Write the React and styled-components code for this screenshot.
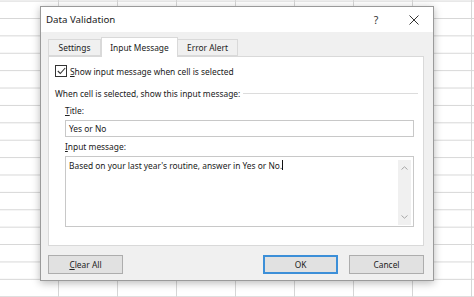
import React from 'react';
import styled, { createGlobalStyle } from 'styled-components';

const GlobalStyle = createGlobalStyle`
  body {
    margin: 0;
    font-family: "Noto Sans", "Open Sans", sans-serif;
    color: #1a1a1a;
  }
`;

const Sheet = styled.div`
  width: 474px;
  height: 297px;
  box-sizing: border-box;
  padding: 6px 0 0 40px;
  overflow: hidden;
  background-color: #fff;
  background-image:
    linear-gradient(to bottom, #d6d6d6 1px, transparent 1px),
    linear-gradient(to right, #d6d6d6 1px, transparent 1px);
  background-size: 100% 17.4px, 59px 100%;
  background-position: 0 0.6px, -1px 0;
`;

const Dialog = styled.div`
  width: 394px;
  height: 275px;
  box-sizing: border-box;
  border: 1px solid #9a9a9a;
  box-shadow: 0 2px 8px rgba(0, 0, 0, 0.28);
  background: #f0f0f0;
  display: flex;
  flex-direction: column;
`;

const TitleBar = styled.div`
  height: 25px;
  background: #fff;
  display: flex;
  align-items: center;
  padding: 0 0 0 5px;
`;

const Title = styled.div`
  flex: 1;
  font-size: 9.7px;
  color: #222;
`;

const BarButton = styled.div`
  width: ${p => p.w}px;
  height: 25px;
  display: flex;
  align-items: center;
  justify-content: center;
  font-size: 10.5px;
  color: #333;
`;

const Body = styled.div`
  flex: 1;
  display: flex;
  flex-direction: column;
  padding: 5px 9px 0 7px;
`;

const Tabs = styled.div`
  display: flex;
  height: 19px;
  align-items: flex-end;
  position: relative;
  z-index: 1;
`;

const Tab = styled.div`
  box-sizing: border-box;
  width: ${p => p.w}px;
  height: ${p => (p.active ? 20 : 17)}px;
  margin-bottom: ${p => (p.active ? -1 : 0)}px;
  display: flex;
  align-items: center;
  justify-content: center;
  font-size: 8.4px;
  color: #222;
  background: ${p => (p.active ? '#fff' : '#f0f0f0')};
  border: 1px solid #d9d9d9;
  border-bottom: ${p => (p.active ? 'none' : '1px solid #d9d9d9')};
  border-left: ${p => (p.first || p.active ? '1px solid #d9d9d9' : 'none')};
`;

const Panel = styled.div`
  box-sizing: border-box;
  height: 190px;
  background: #fff;
  border: 1px solid #d9d9d9;
  padding: 7px 5px 0 6px;
  font-size: 8.4px;
  color: #222;
`;

const CheckRow = styled.label`
  display: flex;
  align-items: center;
  gap: 3px;
  height: 14px;
`;

const Box = styled.span`
  box-sizing: border-box;
  width: 12px;
  height: 12px;
  border: 1px solid #333;
  background: #fff;
  display: flex;
  align-items: center;
  justify-content: center;
`;

const Group = styled.div`
  display: flex;
  align-items: center;
  gap: 3px;
  margin-top: 8px;
  height: 14px;
  white-space: nowrap;
`;

const GroupLine = styled.div`
  flex: 1;
  height: 1px;
  background: #dcdcdc;
`;

const Field = styled.div`
  padding: 0 4px 0 10px;
  display: flex;
  flex-direction: column;
`;

const FieldLabel = styled.div`
  height: 12px;
  line-height: 12px;
  margin-top: ${p => p.mt}px;
  margin-bottom: 3px;
`;

const Input = styled.div`
  box-sizing: border-box;
  height: ${p => p.h}px;
  border: 1px solid #c8c8c8;
  background: #fff;
  padding: ${p => (p.multi ? '3px 2px 0 3px' : '0 3px')};
  display: flex;
  align-items: ${p => (p.multi ? 'flex-start' : 'center')};
  font-size: 8.4px;
  color: #1a1a1a;
`;

const InputText = styled.div`
  flex: 1;
  white-space: nowrap;
`;

const Caret = styled.span`
  display: inline-block;
  width: 1px;
  height: 10px;
  background: #111;
  vertical-align: -1px;
`;

const Scroll = styled.div`
  width: 13px;
  height: 65px;
  background: #f0f0f0;
  display: flex;
  flex-direction: column;
  justify-content: space-between;
  align-items: center;
  padding: 6px 0;
  box-sizing: border-box;
`;

const Footer = styled.div`
  display: flex;
  align-items: center;
  height: 19px;
  margin-top: 9px;
  gap: 11px;
`;

const Button = styled.div`
  box-sizing: border-box;
  width: 75px;
  height: 19px;
  display: flex;
  align-items: center;
  justify-content: center;
  font-size: 8.4px;
  color: #222;
  background: #e1e1e1;
  border: ${p => (p.primary ? '2px solid #3c8fd8' : '1px solid #adadad')};
  margin-left: ${p => (p.push ? 'auto' : '0')};
`;

const Chevron = ({ up }) => (
  <svg width="7" height="4" viewBox="0 0 7 4">
    <path
      d={up ? 'M0.5 3.5 L3.5 0.8 L6.5 3.5' : 'M0.5 0.5 L3.5 3.2 L6.5 0.5'}
      fill="none"
      stroke="#a6a6a6"
      strokeWidth="1"
    />
  </svg>
);

export default function App() {
  return (
    <>
      <GlobalStyle />
      <Sheet>
        <Dialog>
          <TitleBar>
            <Title>Data Validation</Title>
            <BarButton w={38}>?</BarButton>
            <BarButton w={38}>
              <svg width="10" height="10" viewBox="0 0 10 10">
                <path d="M0.5 0.5 L9.5 9.5 M9.5 0.5 L0.5 9.5" stroke="#333" strokeWidth="1" />
              </svg>
            </BarButton>
          </TitleBar>
          <Body>
            <Tabs>
              <Tab w={53} first>Settings</Tab>
              <Tab w={77} active>Input Message</Tab>
              <Tab w={60}>Error Alert</Tab>
            </Tabs>
            <Panel>
              <CheckRow>
                <Box>
                  <svg width="9" height="8" viewBox="0 0 9 8">
                    <path d="M0.8 4 L3.3 6.5 L8.2 1" fill="none" stroke="#333" strokeWidth="1.1" />
                  </svg>
                </Box>
                <span><u>S</u>how input message when cell is selected</span>
              </CheckRow>
              <Group>
                <span>When cell is selected, show this input message:</span>
                <GroupLine />
              </Group>
              <Field>
                <FieldLabel mt={5}><u>T</u>itle:</FieldLabel>
                <Input h={17}>
                  <InputText>Yes or No</InputText>
                </Input>
                <FieldLabel mt={4}><u>I</u>nput message:</FieldLabel>
                <Input h={71} multi>
                  <InputText>
                    Based on your last year's routine, answer in Yes or No.<Caret />
                  </InputText>
                  <Scroll>
                    <Chevron up />
                    <Chevron />
                  </Scroll>
                </Input>
              </Field>
            </Panel>
            <Footer>
              <Button><span><u>C</u>lear All</span></Button>
              <Button primary push>OK</Button>
              <Button>Cancel</Button>
            </Footer>
          </Body>
        </Dialog>
      </Sheet>
    </>
  );
}
